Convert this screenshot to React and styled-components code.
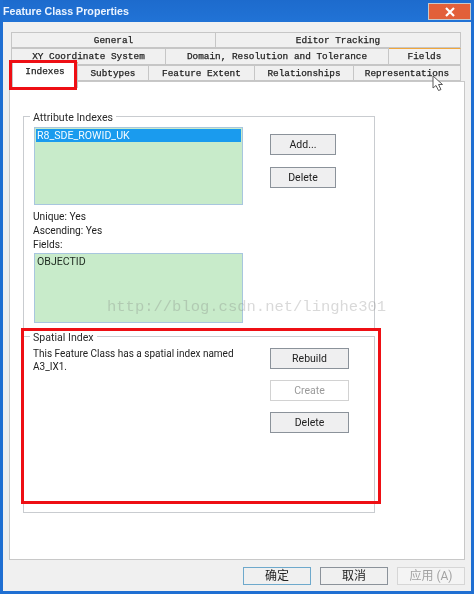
import React from "react";
import styled, { createGlobalStyle } from "styled-components";

const Global = createGlobalStyle`
  html, body { margin: 0; padding: 0; background: #fff; }
  * { box-sizing: border-box; }
`;
const sans = `Roboto, "Noto Sans", "Noto Sans CJK SC", sans-serif`;
const mono = `"Liberation Mono", "Noto Sans CJK SC", monospace`;

const Win = styled.div`
  position: relative; width: 474px; height: 594px; overflow: hidden;
  background: #1f6fd2; padding: 0 3px 3px; display: flex; flex-direction: column;
  font-family: ${sans}; font-size: 10.5px; color: #222; filter: blur(0.35px);
`;
const TitleBar = styled.div`
  height: 22px; flex: none; display: flex; align-items: flex-start; justify-content: space-between;
  background: linear-gradient(#1d6bcd, #2173d6);
`;
const Title = styled.span`
  color: #eaf3ff; font: bold 10.7px/23px "Liberation Sans", sans-serif;
`;
const Close = styled.div`
  width: 43px; height: 17px; margin: 3px 0 0 0; background: #e2603a; border: 1px solid #c9c9c9;
  display: flex; align-items: center; justify-content: center;
`;
const Body = styled.div`
  flex: 1; background: #f0f0f0; display: flex; flex-direction: column;
`;
const TabStack = styled.div`
  width: 458px; margin: 10px 0 0 8px; flex: none; position: relative; z-index: 1;
`;
const TabRow = styled.div`
  display: flex; height: ${p => p.$h}px;
`;
const Tab = styled.div`
  width: ${p => p.$w}px; flex: none; height: 100%; background: #f0f0f0;
  border: 1px solid #c6c6c6; border-left-width: ${p => p.$first ? 1 : 0}px;
  border-top: 1px solid ${p => p.$hot ? "#f0a63c" : "#c6c6c6"};
  font: 9.4px/15px ${mono}; color: #222; text-align: center; white-space: pre;
  -webkit-text-stroke: 0.25px #222;
`;
const ActiveTab = styled(Tab)`
  height: 26px; margin-top: -3px; background: #fff; border-bottom: 0; border-top-color: #f0a63c;
  line-height: 18px; margin-left: 1px;
`;
const Panel = styled.div`
  width: 456px; height: 479px; margin-left: 6px; flex: none; background: #fff;
  border: 1px solid #c8c8c8; padding: 34px 0 0 13px; display: flex; flex-direction: column; gap: 5px;
`;
const Group = styled.div`
  position: relative; width: 352px; height: ${p => p.$h}px; flex: none;
  border: 1px solid #c9ccd0; padding: ${p => p.$pt}px 0 0 10px; display: flex; gap: 27px;
`;
const Legend = styled.span`
  position: absolute; left: 6px; top: -6px; background: #fff; padding: 0 3px;
  line-height: 13px; color: #2a2a2a; font-size: 10.6px;
`;
const LeftCol = styled.div`
  width: 209px; flex: none; display: flex; flex-direction: column;
`;
const List = styled.div`
  height: ${p => p.$h}px; flex: none; background: #c8ebca; border: 1px solid #a8c6de; padding: 1px;
`;
const Item = styled.div`
  height: 13px; padding-left: 1px; font-size: 10.6px; line-height: 13px;
  color: ${p => p.$sel ? "#f4fbff" : "#1e2a20"};
  background: ${p => p.$sel ? "#1a9bee" : "transparent"};
`;
const Info = styled.div`
  margin: 5px 0 1px -1px; line-height: 14px; font-size: 10.2px;
`;
const Note = styled.div`
  margin-left: -1px; line-height: 13px; white-space: nowrap; font-size: 10px;
`;
const BtnCol = styled.div`
  display: flex; flex-direction: column; margin-top: ${p => p.$mt}px; gap: ${p => p.$gap}px;
`;
const Btn = styled.div`
  width: ${p => p.$w}px; height: 21px; flex: none; display: flex; align-items: center; justify-content: center;
  background: ${p => p.$off ? "#fff" : "#efeff0"};
  border: 1px solid ${p => p.$off ? "#d2d2d2" : "#8b929a"};
  color: ${p => p.$off ? "#9a9a9a" : "#222"};
`;
const Footer = styled.div`
  flex: 1; display: flex; justify-content: flex-end; gap: 9px; padding: 7px 6px 0 0;
`;
const FootBtn = styled.div`
  width: 68px; height: 18px; display: flex; align-items: center; justify-content: center;
  background: ${p => p.$off ? "#f4f4f4" : "#f0f0f0"};
  border: 1px solid ${p => p.$off ? "#d6d6d6" : p.$def ? "#6ea9cc" : "#8b929a"};
  color: ${p => p.$off ? "#a2a2a2" : "#222"}; font: 12px/16px ${sans};
`;
const Red = styled.div`
  position: absolute; z-index: 3; border: 3px solid #ee0f14; pointer-events: none;
  left: ${p => p.$x}px; top: ${p => p.$y}px; width: ${p => p.$w}px; height: ${p => p.$h}px;
`;
const Mark = styled.div`
  position: absolute; z-index: 2; left: 107px; top: 298px; font: 15.5px/18px ${mono};
  color: rgba(120,120,120,0.28); white-space: pre;
`;
const Cursor = styled.svg`
  position: absolute; z-index: 4; left: 432px; top: 75px;
`;

export default function App() {
  return (
    <Win>
      <Global />
      <TitleBar>
        <Title>Feature Class Properties</Title>
        <Close>
          <svg width="10" height="10" viewBox="0 0 10 10">
            <path d="M1 1 L9 9 M9 1 L1 9" stroke="#fff" strokeWidth="2.2" />
          </svg>
        </Close>
      </TitleBar>
      <Body>
        <TabStack>
          <TabRow $h={16}>
            <Tab $w={205} $first>General</Tab>
            <Tab $w={245}>Editor Tracking</Tab>
          </TabRow>
          <TabRow $h={17}>
            <Tab $w={155} $first>XY Coordinate System</Tab>
            <Tab $w={223}>Domain, Resolution and Tolerance</Tab>
            <Tab $w={72} $hot>Fields</Tab>
          </TabRow>
          <TabRow $h={16}>
            <ActiveTab $w={66} $first>Indexes</ActiveTab>
            <Tab $w={71}>Subtypes</Tab>
            <Tab $w={106}>Feature Extent</Tab>
            <Tab $w={99}>Relationships</Tab>
            <Tab $w={107}>Representations</Tab>
          </TabRow>
        </TabStack>
        <Panel>
          <Group $h={215} $pt={10}>
            <Legend>Attribute Indexes</Legend>
            <LeftCol>
              <List $h={78}><Item $sel>R8_SDE_ROWID_UK</Item></List>
              <Info>Unique: Yes<br />Ascending: Yes<br />Fields:</Info>
              <List $h={70}><Item>OBJECTID</Item></List>
            </LeftCol>
            <BtnCol $mt={7} $gap={12}>
              <Btn $w={66}>Add...</Btn>
              <Btn $w={66}>Delete</Btn>
            </BtnCol>
          </Group>
          <Group $h={177} $pt={10}>
            <Legend>Spatial Index</Legend>
            <LeftCol>
              <Note>This Feature Class has a spatial index named<br />A3_IX1.</Note>
            </LeftCol>
            <BtnCol $mt={1} $gap={11}>
              <Btn $w={79}>Rebuild</Btn>
              <Btn $w={79} $off>Create</Btn>
              <Btn $w={79}>Delete</Btn>
            </BtnCol>
          </Group>
        </Panel>
        <Footer>
          <FootBtn $def>确定</FootBtn>
          <FootBtn>取消</FootBtn>
          <FootBtn $off>应用 (A)</FootBtn>
        </Footer>
      </Body>
      <Mark>http://blog.csdn.net/linghe301</Mark>
      <Red $x={9} $y={60} $w={68} $h={30} />
      <Red $x={21} $y={328} $w={360} $h={176} />
      <Cursor width="14" height="17" viewBox="0 0 14 17">
        <path d="M1 1 L1 13 L4 10.5 L6.5 15.5 L9 14.5 L6.5 9.5 L10.5 9.5 Z" fill="#fff" stroke="#5a5a5a" strokeWidth="1" />
      </Cursor>
    </Win>
  );
}
